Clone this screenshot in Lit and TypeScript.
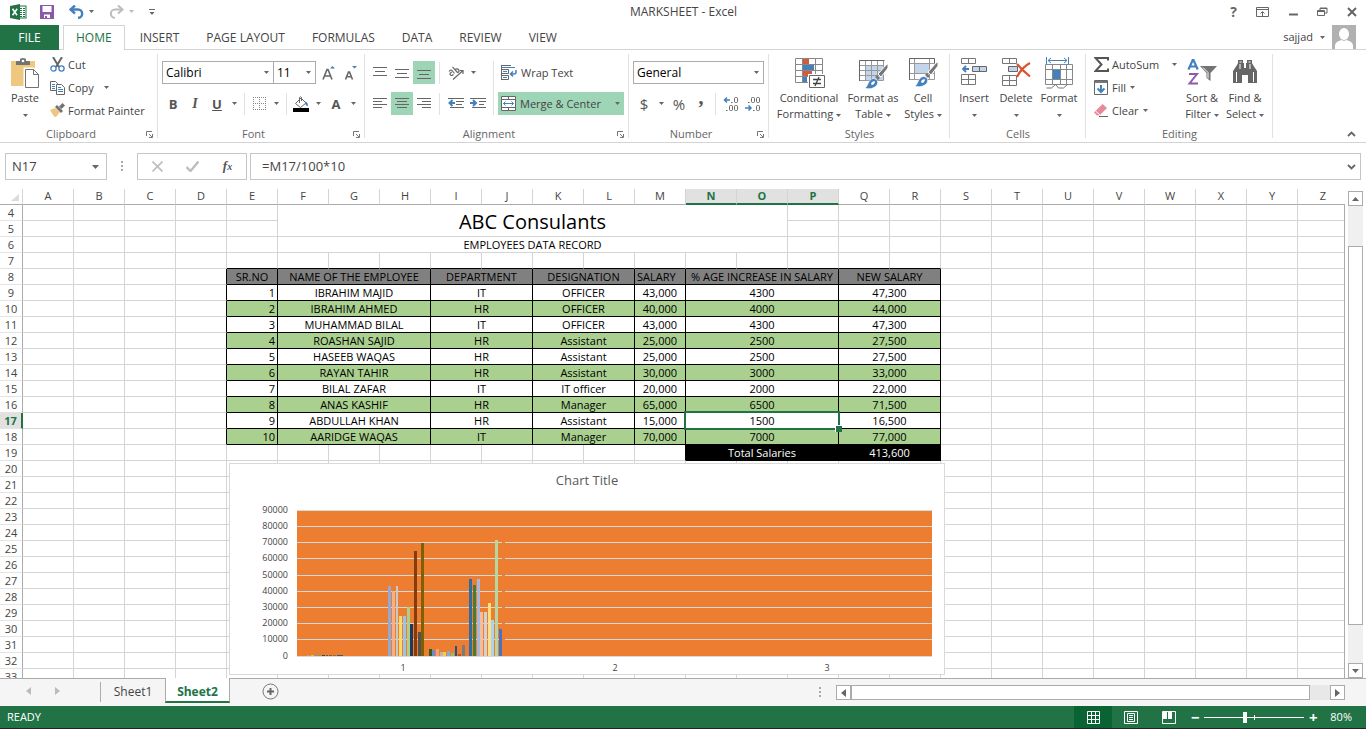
import { LitElement, html, svg, css, nothing } from "lit";
import { customElement, state } from "lit/decorators.js";
import { classMap } from "lit/directives/class-map.js";

const icon = (w: number, h: number, body: unknown) =>
  html`<svg class="ico" width=${w} height=${h} viewBox="0 0 ${w} ${h}" aria-hidden="true">${body}</svg>`;

const arrow = html`<svg class="ico arrow" width="5" height="3" viewBox="0 0 5 3" aria-hidden="true"><path d="M0 0h5L2.5 3z" fill="currentColor" /></svg>`;

const brush = svg`
  <path d="M29 3 L20 13 L23 16 L30 7 V3z" fill="#777" stroke="#fff"/>
  <path d="M19 14 l3 3 -2 2 -3-3z" fill="#777"/>
  <path d="M7 27 C10 26 10 18 15.500 17.500 C20 18 20.500 22 18.500 24.500 C16 27.500 11 28.500 7 27z" fill="#447fbe" stroke="#fff" stroke-width=".6"/>
  <path d="M13 23c.5-2 2-3 4-2.500-.2 2-1.500 3.500-3.200 3.500z" fill="#fff"/>`;

const I = {
  excel: icon(17, 16, svg`
    <rect x="8" y="2" width="8" height="12" fill="#fff" stroke="#217346"/>
    <path d="M10 4.500h2M13 4.500h2M10 6.500h2M13 6.500h2M10 8.500h2M13 8.500h2M10 10.500h2M13 10.500h2M10 12.500h2M13 12.500h2" stroke="#217346"/>
    <path d="M0 2 L10 0 V16 L0 14z" fill="#217346"/>
    <path d="M2.500 4.800 L7 11.200 M7.200 4.800 L2.500 11.200" stroke="#fff" stroke-width="1.600"/>`),
  save: icon(14, 14, svg`
    <path d="M0 0h14v14H0z" fill="#8b57a8"/><path d="M2.500 1h9v6h-9z" fill="#fff"/><path d="M4 9.500h6V13H4z" fill="#fff"/><path d="M5 11h2v2H5z" fill="#8b57a8"/>`),
  undo: icon(15, 14, svg`
    <path d="M2 4.500h7a4 4 0 0 1 0 8.300" fill="none" stroke="#447fbe" stroke-width="2.400"/><path d="M6 .5 L1.500 4.500 L6 8.500" fill="none" stroke="#447fbe" stroke-width="2.400"/>`),
  redo: icon(15, 14, svg`
    <path d="M13 4.500H6a4 4 0 0 0 0 8.300" fill="none" stroke="#bcbcbc" stroke-width="2"/><path d="M9 .5 L13.500 4.500 L9 8.500" fill="none" stroke="#bcbcbc" stroke-width="2"/>`),
  qat: icon(6, 6, svg`<path d="M0 .5h6" stroke="#666"/><path d="M.500 3h5L3 6z" fill="#666"/>`),
  ribbonOpts: icon(13, 10, svg`
    <path d="M.5.5h12v9H.5zM.5 2.500h12" fill="none" stroke="#666"/><path d="M6.500 9V5M4.500 6.500l2-2 2 2" fill="none" stroke="#666"/>`),
  min: icon(10, 10, svg`<path d="M1 7.500h9" stroke="#666" stroke-width="2"/>`),
  restore: icon(11, 10, svg`<path d="M.5 3.500h7v5h-7zM.5 4.500h7M3 3V1h7v5H8M3 1.500h7" fill="none" stroke="#666"/>`),
  close: icon(10, 10, svg`<path d="M1 1l8 8M9 1L1 9" stroke="#666" stroke-width="2"/>`),
  avatar: icon(24, 24, svg`
    <path d="M0 0h24v24H0z" fill="#b1b1b1"/><ellipse cx="12" cy="9" rx="5" ry="6" fill="#fff"/><path d="M3 24v-4q1-4 6-4.500l3 1.500 3-1.500q5 .5 6 4.500v4z" fill="#fff"/><path d="M9 14.500q3 2.500 6 0l.5 1.500L12 18l-3.500-2z" fill="#fff"/>`),
  paste: icon(30, 32, svg`
    <path d="M1 4h24v25H1z" fill="#edc87e"/><path d="M6 8V5q0-1 1-1h3V2.500Q10 1 13 1t3 1.500V4h3q1 0 1 1v3z" fill="#737373"/><circle cx="13" cy="4" r="1.300" fill="#fff"/>
    <path d="M14.500 11.500h9l5.500 5.500v13.500H14.500z" fill="#fff" stroke="#fff" stroke-width="2"/>
    <path d="M15.500 12.500h8l5 5v13h-13z" fill="#fff" stroke="#737373"/><path d="M23.500 12.500v5h5" fill="none" stroke="#737373"/>`),
  cut: icon(15, 15, svg`
    <path d="M3 0l6 10M12 0L6 10" stroke="#666" stroke-width="2"/>
    <circle cx="3.500" cy="11.500" r="2.600" fill="#fff" stroke="#447fbe" stroke-width="1.300"/><circle cx="11.500" cy="11.500" r="2.600" fill="#fff" stroke="#447fbe" stroke-width="1.300"/>`),
  copy: icon(15, 15, svg`
    <path d="M.5 1.500h5l2 2v7h-7z" fill="#fff" stroke="#666"/><path d="M2 4.500h3M2 6.500h3M2 8.500h3" stroke="#447fbe"/>
    <path d="M6.500 4.500h5l3 3v7h-8z" fill="#fff" stroke="#666"/><path d="M8 7.500h3M8 9.500h5M8 11.500h5" stroke="#447fbe"/>`),
  painter: icon(15, 15, svg`
    <path d="M0 7l5-2 5 4-4 5-2-.500z" fill="#edc87e"/><path d="M5 4l2-2 6 6-2 2z" fill="#737373"/><path d="M9 3.500L12.500 0 15 2.500 11.500 6z" fill="#737373"/>`),
  growA: icon(14, 16, svg`<path d="M1 14.500L5 4.500h1l4 10M2.500 11h6" fill="none" stroke="#666" stroke-width="1.600"/><path d="M8 3.500h5L10.500 1z" fill="#447fbe"/>`),
  shrinkA: icon(14, 16, svg`<path d="M1.500 14.500L4.500 7h1l3 7.500M2.500 11.800h5" fill="none" stroke="#666" stroke-width="1.600"/><path d="M8 1h5l-2.500 2.500z" fill="#447fbe"/>`),
  borders: icon(13, 13, svg`<path d="M.5 0v13M6.500 0v13M12.500 0v13M0 .5h13M0 6.500h13M0 12.500h13" fill="none" stroke="#888" stroke-dasharray="1 1"/>`),
  bucket: icon(16, 16, svg`
    <path d="M2.500 7.500L8 2l5 5-5.500 4.500z" fill="#fff" stroke="#666"/><path d="M6.500 7V1.500q1-1.500 2 0V5" fill="none" stroke="#666"/><path d="M12 5.500q4 1 2.500 5-1.500-1-2.500-3z" fill="#447fbe"/><path d="M0 12h16v4H0z" fill="#000"/>`),
  top: icon(14, 12, svg`<path d="M0 .5h14M2 4.500h10M0 8.500h14" stroke="#666"/>`),
  middle: icon(14, 12, svg`<path d="M0 2.500h14M2 6.500h10M0 10.500h14" stroke="#666"/>`),
  bottom: icon(14, 12, svg`<path d="M0 3.500h14M2 7.500h10M0 11.500h14" stroke="#666"/>`),
  left: icon(14, 12, svg`<path d="M0 .5h14M0 3.500h9M0 6.500h14M0 9.500h9" stroke="#666"/>`),
  center: icon(14, 12, svg`<path d="M0 .5h14M2 3.500h10M0 6.500h14M2 9.500h10" stroke="#666"/>`),
  right: icon(14, 12, svg`<path d="M0 .5h14M5 3.500h9M0 6.500h14M5 9.500h9" stroke="#666"/>`),
  orient: icon(16, 14, svg`
    <g fill="none" stroke="#666" stroke-width="1.200"><path d="M1 5.500q2-2.500 3.500-.5l2 2.500M4 6q-3 1-1.500 3 1.500 1 3-.5"/><path d="M4.500.8l5 5.700M7 3.500q2.500-1.500 3.700.3 1 2-1.200 2.900"/><path d="M5 13.500L15 4.500M11.500 4.500H15V8"/></g>`),
  outdent: icon(16, 12, svg`<path d="M0 .5h16M8 3.500h8M8 6.500h6M2 9.500h14" stroke="#666"/><path d="M7 5H2M4.500 2L1.500 5l3 3" fill="none" stroke="#447fbe" stroke-width="2"/>`),
  indent: icon(16, 12, svg`<path d="M0 .5h16M9 3.500h7M9 6.500h5M2 9.500h14" stroke="#666"/><path d="M0 5h5M3 2l3 3-3 3" fill="none" stroke="#447fbe" stroke-width="2"/>`),
  wrap: icon(16, 15, svg`
    <path d="M.5 0v15M.5.5H10M.5 4.500h7v4h-7M.5 10.500h7v4h-7" fill="none" stroke="#666"/><path d="M0 2.500h14M2 6.500h4M2 12.500h4" stroke="#447fbe"/><path d="M15 5v2q0 2-2 2h-3M12 6.500L9.500 9l2.500 2.500" fill="none" stroke="#447fbe" stroke-width="1.500"/>`),
  merge: icon(15, 15, svg`
    <path d="M.5.5h14v14H.5zM.5 3.500h14M.5 11.500h14M7.500 0v3M7.500 12v3" fill="#fff" stroke="#666"/><path d="M2.500 7.500h10M4.500 5.500l-2 2 2 2M10.500 5.500l2 2-2 2" fill="none" stroke="#447fbe"/>`),
  cond: icon(31, 32, svg`
    <path d="M1.500 1.500h27v24h-27z" fill="#fff"/><path d="M9 2h6v5H9zM9 13h9v6H9z" fill="#d35b3c"/><path d="M9 7h11v6H9zM9 19h4v6H9z" fill="#447fbe"/>
    <path d="M1.500 1.500h27v24h-27zM8.500 1v25M21.500 1v25M1 7.500h28M1 13.500h28M1 19.500h28" fill="none" stroke="#888"/>
    <path d="M14 17h17v15H14z" fill="#fff"/><path d="M15.500 18.500h15v12h-15z" fill="#fff" stroke="#666"/><path d="M19 22.500h8M19 26.500h8M25 20l-4 9" stroke="#444" stroke-width="1.300"/>`),
  table: icon(32, 32, svg`
    <path d="M2.500 3.500h24v20h-24z" fill="#fff"/><path d="M8 9h18v14H8z" fill="#c3d5ea"/>
    <path d="M2.500 3.500h24v20h-24zM2 8.500h25M2 13.500h25M2 18.500h25M8.500 3v21M14.500 3v21M20.500 3v21" fill="none" stroke="#999"/><path d="M2.500 24V3.500h25" fill="none" stroke="#666"/>
    <g transform="translate(1 4)">${brush}</g>`),
  cell: icon(32, 32, svg`
    <path d="M2.500 1.500h25v21h-25z" fill="#fff"/><path d="M2.500 1.500h25v21h-25zM7.500 1v22M22.500 1v22M2 6.500h26M2 16.500h26" fill="none" stroke="#999"/><path d="M8 7h14v9H8z" fill="#c3d5ea"/><path d="M2.500 23V1.500h25V6" fill="none" stroke="#666"/>
    <g transform="translate(1 2)">${brush}</g>`),
  insert: icon(28, 30, svg`
    <path d="M1.500 1.500h14v5h-14zM8.500 1v6" fill="#fff" stroke="#777"/><path d="M1.500 17.500h14v10h-14zM8.500 17v11M1 22.500h15" fill="#fff" stroke="#777"/>
    <path d="M12.500 9.500h14v5h-14z" fill="#c3d5ea" stroke="#666"/><path d="M19.500 9v6" stroke="#666"/><path d="M9 12H3M6 9l-3 3 3 3" fill="none" stroke="#447fbe" stroke-width="1.800"/>`),
  del: icon(30, 30, svg`
    <path d="M1.500 1.500h14v5h-14zM8.500 1v6" fill="#fff" stroke="#777"/><path d="M1.500 18.500h14v10h-14zM8.500 18v11M1 23.500h15" fill="#fff" stroke="#777"/>
    <path d="M7.500 9.500h9v5h-9z" fill="#c3d5ea" stroke="#666"/><path d="M16 7q5 6 13 12.500M29 6q-8 4-13 14" fill="none" stroke="#d8532f" stroke-width="2.200"/>`),
  format: icon(30, 32, svg`
    <path d="M2.500 0v7M24.500 0v7M4 3.500h19M7 1L4 3.500 7 6M20 1l3 2.500L20 6" fill="none" stroke="#447fbe"/>
    <path d="M1.500 7.500h27v20h-27zM1 12.500h28M1 22.500h28M8.500 7v21M16.500 7v21M22.500 7v21" fill="#fff" stroke="#888"/><path d="M9 13h7v9H9z" fill="#447fbe"/><path d="M2.500 31h5l4-3.500 3 3.500h5l4-3.500" fill="none" stroke="#777"/>`),
  sum: icon(15, 15, svg`<path d="M14 3.500V1H1.500l6 6.500-6 6.500H14v-2.500" fill="none" stroke="#555" stroke-width="2"/>`),
  fill: icon(14, 15, svg`<path d="M.5.5h13v14H.5z" fill="#fff" stroke="#666"/><path d="M1 1h12v2H1z" fill="#777"/><path d="M7 5v7M3.500 8.500L7 12l3.500-3.500" fill="none" stroke="#447fbe" stroke-width="2"/>`),
  clear: icon(15, 14, svg`<path d="M0 8.500L8.500 0 13 4 5.500 11.500H3z" fill="#e8899a"/><path d="M1.500 7l5 4.500" stroke="#fff"/><path d="M5 12.500h9" stroke="#666"/>`),
  sort: icon(30, 30, svg`
    <path d="M1.500 12.500L5.700 3h.8l4.200 9.500M3 9.500h6.500" fill="none" stroke="#447fbe" stroke-width="2.200"/><path d="M2 17h8L2.500 26.500H11" fill="none" stroke="#9059b0" stroke-width="2"/>
    <path d="M13 9h17l-6.500 7v8l-4-3v-5z" fill="#737373"/><path d="M16 10.500l5 5v6" fill="none" stroke="#fff"/>`),
  find: icon(28, 28, svg`
    <path d="M7 3h5v3h1v5h2V6h1V3h5v3l1 2 4 6v12h-9v-8h-6v8H2V14l4-6 1-2z" fill="#666"/><path d="M8.500 5h2M17.500 5h2M5.500 15v10M9 7v5M22.500 15v10M19 7v5" stroke="#fff"/>`),
  collapse: icon(9, 6, svg`<path d="M1 5l3.500-3.500L8 5" fill="none" stroke="#666" stroke-width="1.800"/>`),
  down: icon(9, 6, svg`<path d="M1 1l3.500 3.500L8 1" fill="none" stroke="#666" stroke-width="1.800"/>`),
  launcher: icon(7, 7, svg`<path d="M.5 5V.5H6M3 3l3 3M6.500 3v3.500H3" fill="none" stroke="#777"/>`),
  dots: icon(3, 11, svg`<path d="M0 0h2v2H0zM0 4h2v2H0zM0 8h2v2H0z" fill="#aaa"/>`),
  cancel: icon(11, 11, svg`<path d="M.5.500l10 10M10.500.500l-10 10" stroke="#bdbdbd" stroke-width="1.600"/>`),
  enter: icon(13, 11, svg`<path d="M.5 6L4.500 10 12.500.500" fill="none" stroke="#bdbdbd" stroke-width="2.400"/>`),
  decInc: icon(15, 14, svg`<path d="M7 3H1M4 .5L1.500 3 4 5.500" fill="none" stroke="#447fbe" stroke-width="1.500"/><g fill="none" stroke="#666"><rect x="11.500" y=".5" width="3" height="5" rx="1"/><rect x="6.500" y="8.500" width="3" height="5" rx="1"/><rect x="11.500" y="8.500" width="3" height="5" rx="1"/></g><path d="M8 5h1.500v1H8zM3 13h1.500v1H3z" fill="#666"/>`),
  decDec: icon(15, 14, svg`<path d="M0 11h6M3.500 8.500L6 11l-2.500 2.500" fill="none" stroke="#447fbe" stroke-width="1.500"/><g fill="none" stroke="#666"><rect x="6.500" y=".5" width="3" height="5" rx="1"/><rect x="11.500" y=".5" width="3" height="5" rx="1"/><rect x="11.500" y="8.500" width="3" height="5" rx="1"/></g><path d="M3 5h1.500v1H3zM8 13h1.500v1H8z" fill="#666"/>`),
  plus: icon(17, 17, svg`<circle cx="8.500" cy="8.500" r="7.500" fill="none" stroke="#777"/><path d="M8.500 5v7M5 8.500h7" stroke="#666" stroke-width="2"/>`),
  prev: icon(5, 8, svg`<path d="M5 0v8L0 4z" fill="currentColor"/>`),
  next: icon(5, 8, svg`<path d="M0 0v8l5-4z" fill="currentColor"/>`),
  up: icon(7, 4, svg`<path d="M0 4h7L3.500 0z" fill="currentColor"/>`),
  dn: icon(7, 4, svg`<path d="M0 0h7L3.500 4z" fill="currentColor"/>`),
  corner: icon(8, 7, svg`<path d="M8 0v7H0z" fill="#dcdcdc"/>`),
  normal: icon(13, 13, svg`<path d="M.5.5h12v12H.5zM4.500 0v13M8.500 0v13M0 4.500h13M0 8.500h13" fill="none" stroke="#fff"/>`),
  pageLayout: icon(14, 13, svg`<path d="M.5.5h13v12H.5zM3.500 2.500h7v8h-7zM5 4.500h4M5 6.500h4M5 8.500h4" fill="none" stroke="#fff"/>`),
  pageBreak: icon(14, 13, svg`<path d="M.5.5h13v12H.5z" fill="none" stroke="#fff"/><path d="M1 1h4v7H1zM6 1h4v7H6z" fill="#fff"/>`),
};

interface Employee { name: string; dept: string; role: string; salary: string; raise: string; total: string }

const EMPLOYEES: Employee[] = [
  ["IBRAHIM MAJID", "IT", "OFFICER", "43,000", "4300", "47,300"],
  ["IBRAHIM AHMED", "HR", "OFFICER", "40,000", "4000", "44,000"],
  ["MUHAMMAD BILAL", "IT", "OFFICER", "43,000", "4300", "47,300"],
  ["ROASHAN SAJID", "HR", "Assistant", "25,000", "2500", "27,500"],
  ["HASEEB WAQAS", "HR", "Assistant", "25,000", "2500", "27,500"],
  ["RAYAN TAHIR", "HR", "Assistant", "30,000", "3000", "33,000"],
  ["BILAL ZAFAR", "IT", "IT officer", "20,000", "2000", "22,000"],
  ["ANAS KASHIF", "HR", "Manager", "65,000", "6500", "71,500"],
  ["ABDULLAH KHAN", "HR", "Assistant", "15,000", "1500", "16,500"],
  ["AARIDGE WAQAS", "IT", "Manager", "70,000", "7000", "77,000"],
].map(([name, dept, role, salary, raise, total]) => ({ name, dept, role, salary, raise, total }));

const COLUMNS = "ABCDEFGHIJKLMNOPQRSTUVWXYZ".split("");
const ROWS = Array.from({ length: 30 }, (_, i) => i + 4);

/* Chart series: x, width, top, colour; every bar stands on the category axis. */
const BASE = 193;
const BARS: [number, number, number, string][] = [
  [78, 3, 192, "#a5a5a5"], [82, 3, 192, "#ffc000"], [85, 3, 192, "#5b9bd5"], [89, 3, 192, "#70ad47"], [93, 3, 192, "#264478"],
  [97, 2, 192, "#9e480e"], [100, 3, 192, "#636363"], [104, 3, 192, "#997300"], [108, 3, 192, "#255e91"], [111, 3, 192, "#43682b"],
  [159, 3, 123, "#8faadc"], [163, 3, 128, "#f4b183"], [167, 2, 123, "#c9c9c9"], [170, 3, 153, "#ffd966"], [174, 3, 153, "#9dc3e6"],
  [178, 3, 144, "#a9d18e"], [181, 3, 161, "#203864"], [185, 3, 88, "#843c0c"], [189, 3, 169, "#525252"], [192, 3, 80, "#7f6000"],
  [200, 3, 186, "#3a5a24"], [203, 3, 187, "#698ed0"], [207, 3, 186, "#f1a377"], [211, 3, 189, "#b7b7b7"], [214, 3, 189, "#ffcd33"],
  [218, 3, 188, "#7cafdd"], [222, 3, 190, "#8cc168"], [226, 2, 183, "#264f91"], [229, 3, 191, "#b85410"], [233, 3, 182, "#7b7b7b"],
  [240, 3, 116, "#2e6ca4"], [244, 3, 122, "#4f7b2f"], [248, 3, 116, "#a2b9e2"], [251, 3, 149, "#f4bd9e"], [255, 3, 149, "#d2d2d2"],
  [259, 3, 140, "#ffe07f"], [262, 3, 157, "#b1cfee"], [266, 3, 77, "#b7d7a0"], [270, 3, 166, "#4472c4"], [273, 3, 68, "#ed7d31"],
];
const GRIDLINES = [47, 63, 79, 95, 112, 128, 144, 160, 176, 193];

@customElement("app-root")
export class AppRoot extends LitElement {
  @state() private tab = "HOME";
  @state() private sheet = "Sheet2";

  static styles = css`
    :host { display: flex; flex-direction: column; height: 100vh; background: #fff; color: #444; font: 11px/16px "Open Sans", "Noto Sans", sans-serif; overflow: hidden; }
    * { box-sizing: border-box; }
    button, input, select { font: inherit; color: inherit; background: none; border: 0; padding: 0; margin: 0; border-radius: 0; }
    button { display: flex; align-items: center; justify-content: center; white-space: nowrap; }
    select { appearance: none; }
    a { color: inherit; text-decoration: none; }
    .ico { display: block; flex: none; }
    .arrow { display: inline-block; vertical-align: middle; color: #666; }

    .titlebar { display: grid; grid-template-columns: 1fr auto 1fr; align-items: center; height: 25px; padding: 0 9px 2px 10px; flex: none; font-size: 12px; }
    .quick { display: flex; align-items: center; }
    .quick .save { margin-left: 13px; }
    .quick .undo { margin-left: 15px; }
    .quick .split { margin-left: 5px; width: 5px; }
    .quick .redo { margin-left: 15px; }
    .quick .faint .arrow { color: #bbb; }
    .quick .more { margin-left: 15px; }
    .window { display: flex; justify-content: flex-end; gap: 19px; align-items: center; }
    .window .help { font: bold 14px/16px "Open Sans", sans-serif; color: #666; }

    .tabs { display: flex; gap: 1px; height: 25px; flex: none; border-bottom: 1px solid #d4d4d4; padding-right: 10px; font-size: 12px; }
    .tabs a { padding: 0 13px; line-height: 25px; }
    .tabs .file { background: #217346; color: #fff; width: 59px; margin-right: 3px; text-align: center; padding: 0; height: 25px; }
    .tabs .current { height: 25px; color: #217346; background: #fff; border: 1px solid #d4d4d4; border-bottom: 0; padding: 0 12px; margin-right: 1px; line-height: 24px; }
    .user { margin-left: auto; display: flex; align-items: center; gap: 7px; font-size: 11px; }

    .ribbon { display: flex; height: 93px; flex: none; border-bottom: 1px solid #d4d4d4; position: relative; }
    .group { display: flex; flex-direction: column; position: relative; flex: none; }
    .group::after { content: ""; position: absolute; right: 0; top: 4px; height: 84px; width: 1px; background: #e1e1e1; }
    .body { display: flex; height: 76px; padding-top: 3px; }
    .label { display: flex; height: 16px; color: #666; text-align: center; padding: 0 5px; align-items: center; }
    .label span { flex: 1; padding-right: 9px; }
    .label.plain span { padding-right: 0; }
    .clipboard { width: 158px; } .font { width: 207px; } .alignment { width: 264px; } .number { width: 140px; }
    .styles { width: 181px; } .cells { width: 136px; } .editing { width: 187px; }
    .big { flex-direction: column; justify-content: flex-start; padding-top: 3px; height: 73px; }
    .big .pic { height: 34px; display: flex; align-items: flex-start; padding-top: 1px; }
    .big .line { display: block; height: 16px; }
    .w40 { width: 40px; } .w42 { width: 42px; } .w44 { width: 44px; } .w46 { width: 46px; } .w54 { width: 54px; } .w74 { width: 74px; }
    .clipboard .body { padding-left: 5px; gap: 5px; }
    .styles .body, .cells .body { padding-left: 3px; }
    .stack { display: flex; flex-direction: column; }
    .stack button { height: 23px; justify-content: flex-start; gap: 4px; }
    .stack .pic { width: 14px; display: flex; justify-content: center; }
    .clipboard .stack .arrow { margin-left: 6px; }
    .editing .body { padding-left: 8px; }
    .editing .stack { width: 87px; }
    .editing .stack .far { margin-left: auto; padding-right: 4px; display: flex; }

    .rows { display: flex; flex-direction: column; padding-top: 8px; gap: 8px; }
    .row { display: flex; height: 23px; align-items: center; }
    .font .rows, .number .rows, .alignment .body { padding-left: 4px; }
    .combo { position: relative; display: flex; height: 23px; }
    .combo select { width: 100%; height: 23px; border: 1px solid #ababab; padding-left: 3px; color: #000; font-size: 12px; }
    .combo .arrow { position: absolute; right: 5px; top: 10px; }
    .face { width: 112px; } .size { width: 43px; margin: 0 2px 0 -1px; } .fmt { width: 131px; }
    .tool { width: 22px; height: 23px; color: #555; }
    .tool.on, .wide.on { background: #9fd5b7; }
    .drop { width: 13px; height: 23px; }
    .b { font-weight: bold; font-size: 13px; } .i { font: italic bold 14px/16px "Liberation Serif", serif; } .u { font-weight: bold; font-size: 13px; text-decoration: underline; }
    .sym { font-size: 15px; }
    .comma { font: bold 20px/16px "Liberation Serif", serif; padding-bottom: 14px; }
    .sep { width: 1px; height: 22px; background: #e1e1e1; margin: 0 3px; flex: none; }
    .alignment .sep { margin: 0 5px 0 4px; }
    .alignment .sep.tall { height: 54px; margin: 8px 4px 0; }
    .wide { height: 23px; width: 126px; padding: 0 4px 0 3px; gap: 4px; justify-content: flex-start; }
    .wide .arrow { margin-left: auto; }
    .collapse { position: absolute; right: 10px; bottom: 5px; }

    .formula { display: flex; height: 46px; padding: 10px 5px 9px; flex: none; font-size: 13px; }
    .box { border: 1px solid #c6c6c6; display: flex; align-items: center; height: 27px; color: #666; }
    .box input { padding-bottom: 2px; color: #444; }
    .name { width: 102px; padding: 0 6px; }
    .name input { width: 80px; }
    .formula .grip { width: 30px; display: flex; justify-content: center; align-items: center; }
    .fx { width: 110px; justify-content: space-around; padding: 0 2px; margin-right: 3px; }
    .fx .func { font: italic bold 13px/16px "Liberation Serif", serif; color: #555; }
    .fx small { font-size: 10px; }
    .expr { flex: 1; padding: 0 4px 0 11px; }
    .expr input { flex: 1; }

    .work { display: flex; flex: 1; min-height: 0; border-bottom: 1px solid #ababab; }
    .grid { flex: 1; min-width: 0; overflow: hidden; position: relative; }
    table { border-collapse: separate; border-spacing: 0; table-layout: fixed; width: 1349px; color: #000; }
    .rowcol { width: 23px; } .col { width: 51px; }
    th, td { padding: 0; height: 16px; line-height: 15px; font-weight: normal; border: 0 solid #d4d4d4; border-width: 0 1px 1px 0; white-space: nowrap; text-align: center; }
    thead th { border-bottom-color: #ababab; color: #444; line-height: 14px; vertical-align: top; }
    tbody th { border-right-color: #ababab; border-bottom-color: #e4e4e4; color: #444; }
    thead th.sel { background: #e1e1e1; color: #217346; font-weight: bold; border-bottom: 2px solid #217346; }
    tbody th.sel { background: #e1e1e1; color: #217346; font-weight: bold; border-right: 2px solid #217346; }
    thead th.corner { padding: 5px 0 0 11px; }
    td.bb { border-bottom-color: #000; }
    td.br { border-right-color: #000; }
    td.head { background: #808080; }
    td.alt { background: #a9d08e; }
    td.num { text-align: right; padding-right: 2px; }
    td.money { text-align: right; padding-right: 8px; }
    td.start { text-align: left; padding-left: 2px; }
    td.black { background: #000; color: #fff; border-color: #000; }
    td.title { font-size: 20px; line-height: 28px; padding-top: 3px; }
    td.active { position: relative; }
    .cursor { position: absolute; inset: -2px; border: 2px solid #217346; z-index: 1; }
    .cursor::after { content: ""; position: absolute; right: -4px; bottom: -4px; width: 6px; height: 6px; background: #217346; border: solid #fff; border-width: 1px 0 0 1px; }
    .chart { position: absolute; left: 229px; top: 274px; margin: 0; }
    .chart svg { display: block; }
    .chart text { fill: #595959; }
    .chart .ct { font-size: 13px; }
    .chart .ax { font-size: 9px; fill: #444; }

    .vscroll { width: 22px; position: relative; padding: 2px 3px 0 4px; display: flex; flex-direction: column; flex: none; }
    .vscroll::before { content: ""; position: absolute; left: 0; top: 15px; bottom: 0; width: 1px; background: #ababab; }
    .vtrack { flex: 1; width: 15px; background: #f0f0f0; padding: 40px 0 38px; display: flex; }
    .thumb { flex: 1; border: 1px solid #ababab; background: #fff; }
    .sb { width: 15px; height: 15px; border: 1px solid #ababab; background: #fff; color: #666; flex: none; }

    .sheets { display: flex; height: 27px; flex: none; background: #f5f5f5; font-size: 12px; padding-right: 21px; }
    .nav { width: 100px; padding: 0 40px 3px 26px; display: flex; justify-content: space-between; align-items: center; color: #bbb; }
    .sheets a { height: 20px; width: 65px; text-align: center; border-left: 1px solid #ababab; margin-top: 3px; line-height: 19px; }
    .sheets a.current { color: #217346; font-weight: bold; background: #fff; height: 25px; margin-top: -1px; border-right: 1px solid #ababab; border-bottom: 2px solid #217346; line-height: 27px; }
    .add { margin: 0 0 2px 32px; }
    .sheets .grip { margin-left: auto; padding: 8px 14px 0 0; }
    .hscroll { display: flex; width: 509px; margin-top: 6px; height: 15px; }
    .htrack { flex: 1; background: #e8e8e8; display: flex; padding-right: 20px; }

    .status { display: flex; height: 23px; flex: none; background: #217346; color: #fff; border-bottom: 1px solid #222; align-items: stretch; padding: 0 14px 0 7px; }
    .status .ready { margin-right: auto; line-height: 22px; }
    .view { width: 38px; }
    .view.on { background: #0a6332; }
    .zoom { display: flex; align-items: center; }
    .zoom button { width: 14px; font: bold 15px/16px "Open Sans", sans-serif; }
    .zoom input { appearance: none; width: 100px; height: 12px; margin: 0 2px; background: linear-gradient(#fff, #fff) 0 50% / 100% 1px no-repeat, linear-gradient(#fff, #fff) 50% 50% / 1px 5px no-repeat; }
    .zoom input::-webkit-slider-thumb { appearance: none; width: 4px; height: 11px; background: #fff; }
    .zoom .pct { margin-left: 10px; }
  `;

  private big(pic: unknown, a: string, b: string, w: string) {
    return html`<button class="big ${w}"><span class="pic">${pic}</span><span class="line">${a}</span><span class="line">${b} ${arrow}</span></button>`;
  }

  private label(name: string, launcher = true) {
    return html`<div class=${classMap({ label: true, plain: !launcher })}><span>${name}</span>${launcher ? html`<button aria-label="${name} settings">${I.launcher}</button>` : nothing}</div>`;
  }

  private tool(pic: unknown, name: string, on = false) {
    return html`<button class=${classMap({ tool: true, on })} aria-label=${name}>${pic}</button>`;
  }

  private drop(name: string) {
    return html`<button class="drop" aria-label="${name} options">${arrow}</button>`;
  }

  private ribbon() {
    return html`
      <section class="ribbon">
        <div class="group clipboard">
          <div class="body">
            ${this.big(I.paste, "Paste", "", "w40")}
            <div class="stack">
              <button><span class="pic">${I.cut}</span>Cut</button>
              <button><span class="pic">${I.copy}</span>Copy ${arrow}</button>
              <button><span class="pic">${I.painter}</span>Format Painter</button>
            </div>
          </div>
          ${this.label("Clipboard")}
        </div>
        <div class="group font">
          <div class="body"><div class="rows">
            <div class="row">
              <label class="combo face"><select aria-label="Font"><option>Calibri</option></select>${arrow}</label>
              <label class="combo size"><select aria-label="Font size"><option>11</option></select>${arrow}</label>
              ${this.tool(I.growA, "Increase font size")}${this.tool(I.shrinkA, "Decrease font size")}
            </div>
            <div class="row">
              <button class="tool b">B</button><button class="tool i">I</button><button class="tool u">U</button>${this.drop("Underline")}
              <span class="sep"></span>${this.tool(I.borders, "Borders")}${this.drop("Borders")}
              <span class="sep"></span>${this.tool(I.bucket, "Fill color")}${this.drop("Fill color")}<button class="tool b">A</button>${this.drop("Font color")}
            </div>
          </div></div>
          ${this.label("Font")}
        </div>
        <div class="group alignment">
          <div class="body">
            <div class="rows">
              <div class="row">${this.tool(I.top, "Top align")}${this.tool(I.middle, "Middle align")}${this.tool(I.bottom, "Bottom align", true)}
                <span class="sep"></span>${this.tool(I.orient, "Orientation")}${this.drop("Orientation")}</div>
              <div class="row">${this.tool(I.left, "Align left")}${this.tool(I.center, "Center", true)}${this.tool(I.right, "Align right")}
                <span class="sep"></span>${this.tool(I.outdent, "Decrease indent")}${this.tool(I.indent, "Increase indent")}</div>
            </div>
            <span class="sep tall"></span>
            <div class="rows">
              <button class="wide">${I.wrap}Wrap Text</button>
              <button class="wide on">${I.merge}Merge &amp; Center ${arrow}</button>
            </div>
          </div>
          ${this.label("Alignment")}
        </div>
        <div class="group number">
          <div class="body"><div class="rows">
            <label class="combo fmt"><select aria-label="Number format"><option>General</option></select>${arrow}</label>
            <div class="row">
              <button class="tool sym">$</button>${this.drop("Accounting")}<button class="tool sym">%</button><button class="tool comma">,</button>
              <span class="sep"></span>${this.tool(I.decInc, "Increase decimal")}${this.tool(I.decDec, "Decrease decimal")}
            </div>
          </div></div>
          ${this.label("Number")}
        </div>
        <div class="group styles">
          <div class="body">
            ${this.big(I.cond, "Conditional", "Formatting", "w74")}${this.big(I.table, "Format as", "Table", "w54")}${this.big(I.cell, "Cell", "Styles", "w46")}
          </div>
          ${this.label("Styles", false)}
        </div>
        <div class="group cells">
          <div class="body">${this.big(I.insert, "Insert", "", "w42")}${this.big(I.del, "Delete", "", "w42")}${this.big(I.format, "Format", "", "w44")}</div>
          ${this.label("Cells", false)}
        </div>
        <div class="group editing">
          <div class="body">
            <div class="stack">
              <button><span class="pic">${I.sum}</span>AutoSum <span class="far">${arrow}</span></button>
              <button><span class="pic">${I.fill}</span>Fill ${arrow}</button>
              <button><span class="pic">${I.clear}</span>Clear ${arrow}</button>
            </div>
            ${this.big(I.sort, "Sort &", "Filter", "w42")}${this.big(I.find, "Find &", "Select", "w44")}
          </div>
          ${this.label("Editing", false)}
        </div>
        <button class="collapse" aria-label="Collapse the ribbon">${I.collapse}</button>
      </section>`;
  }

  private empty(n: number, last = "") {
    return Array.from({ length: n }, (_, i) => html`<td class=${i === n - 1 ? last : ""}></td>`);
  }

  private cells(row: number) {
    if (row === 4) return html`${this.empty(5)}<td class="title" colspan="10" rowspan="2">ABC Consulants</td>${this.empty(11)}`;
    if (row === 5) return html`${this.empty(5)}${this.empty(11)}`;
    if (row === 6) return html`${this.empty(5)}<td colspan="10">EMPLOYEES DATA RECORD</td>${this.empty(11)}`;
    if (row === 7) return COLUMNS.map((_, i) => html`<td class=${i >= 4 && i <= 17 ? "bb" : ""}></td>`);
    if (row === 8) {
      return html`${this.empty(4, "br")}
        <td class="bb br head">SR.NO</td><td class="bb br head" colspan="3">NAME OF THE EMPLOYEE</td><td class="bb br head" colspan="2">DEPARTMENT</td>
        <td class="bb br head" colspan="2">DESIGNATION</td><td class="bb br head start">SALARY</td><td class="bb br head" colspan="3">% AGE INCREASE IN SALARY</td>
        <td class="bb br head" colspan="2">NEW SALARY</td>${this.empty(8)}`;
    }
    if (row <= 18) {
      const e = EMPLOYEES[row - 9];
      const c = row % 2 ? "bb br" : "bb br alt";
      return html`${this.empty(4, "br")}
        <td class="${c} num">${row - 8}</td><td class=${c} colspan="3">${e.name}</td><td class=${c} colspan="2">${e.dept}</td>
        <td class=${c} colspan="2">${e.role}</td><td class="${c} money">${e.salary}</td>
        <td class="${c} ${row === 17 ? "active" : ""}" colspan="3">${e.raise}${row === 17 ? html`<span class="cursor"></span>` : nothing}</td>
        <td class=${c} colspan="2">${e.total}</td>${this.empty(8)}`;
    }
    if (row === 19) return html`${this.empty(13, "br")}<td class="black" colspan="3">Total Salaries</td><td class="black" colspan="2">413,600</td>${this.empty(8)}`;
    return this.empty(26);
  }

  private chart() {
    return html`<figure class="chart">
      <svg width="716" height="212" viewBox="0 0 716 212" role="img" aria-label="Chart Title">
        <rect x=".5" y=".5" width="715" height="211" fill="#fff" stroke="#d9d9d9" />
        <text class="ct" x="358" y="22" text-anchor="middle">Chart Title</text>
        <rect x="68" y="47" width="635" height="146" fill="#ed7d31" />
        ${GRIDLINES.map((y) => svg`<rect x="68" y=${y} width="635" height="1" fill="#d9d9d9"/>`)}
        ${BARS.map(([x, w, y, c]) => svg`<rect x=${x} y=${y} width=${w} height=${BASE - y} fill=${c}/>`)}
        ${GRIDLINES.map((y, i) => svg`<text class="ax" x="59" y=${y + 3} text-anchor="end">${(9 - i) * 10000}</text>`)}
        ${[1, 2, 3].map((n) => svg`<text class="ax" x=${n * 212 - 38} y="208" text-anchor="middle">${n}</text>`)}
      </svg>
    </figure>`;
  }

  render() {
    const tabs = ["HOME", "INSERT", "PAGE LAYOUT", "FORMULAS", "DATA", "REVIEW", "VIEW"];
    return html`
      <header class="titlebar">
        <div class="quick">
          ${I.excel}<button class="save" aria-label="Save">${I.save}</button>
          <button class="undo" aria-label="Undo">${I.undo}</button><button class="split" aria-label="Undo list">${arrow}</button>
          <button class="redo" aria-label="Redo">${I.redo}</button><button class="split faint" aria-label="Redo list">${arrow}</button>
          <button class="more" aria-label="Customize toolbar">${I.qat}</button>
        </div>
        <span>MARKSHEET - Excel</span>
        <div class="window">
          <button class="help" aria-label="Help">?</button><button aria-label="Ribbon display options">${I.ribbonOpts}</button>
          <button aria-label="Minimize">${I.min}</button><button aria-label="Restore">${I.restore}</button><button aria-label="Close">${I.close}</button>
        </div>
      </header>
      <nav class="tabs">
        <a class="file" href="#">FILE</a>
        ${tabs.map((t) => html`<a href="#" class=${classMap({ current: t === this.tab })} @click=${() => (this.tab = t)}>${t}</a>`)}
        <div class="user"><span>sajjad</span>${arrow}${I.avatar}</div>
      </nav>
      ${this.ribbon()}
      <section class="formula">
        <label class="box name"><input aria-label="Name box" value="N17" />${I.dn}</label>
        <span class="grip">${I.dots}</span>
        <div class="box fx">
          <button aria-label="Cancel">${I.cancel}</button><button aria-label="Enter">${I.enter}</button><button class="func"><span>f<small>x</small></span></button>
        </div>
        <label class="box expr"><input aria-label="Formula" value="=M17/100*10" />${I.down}</label>
      </section>
      <main class="work">
        <div class="grid">
          <table>
            <colgroup><col class="rowcol" />${COLUMNS.map(() => html`<col class="col" />`)}</colgroup>
            <thead><tr><th class="corner">${I.corner}</th>${COLUMNS.map((c) => html`<th class=${"NOP".includes(c) ? "sel" : ""}>${c}</th>`)}</tr></thead>
            <tbody>${ROWS.map((r) => html`<tr><th class=${r === 17 ? "sel" : ""}>${r}</th>${this.cells(r)}</tr>`)}</tbody>
          </table>
          ${this.chart()}
        </div>
        <div class="vscroll">
          <button class="sb" aria-label="Scroll up">${I.up}</button>
          <div class="vtrack"><div class="thumb"></div></div>
          <button class="sb" aria-label="Scroll down">${I.dn}</button>
        </div>
      </main>
      <nav class="sheets">
        <div class="nav"><button aria-label="Previous sheet">${I.prev}</button><button aria-label="Next sheet">${I.next}</button></div>
        ${["Sheet1", "Sheet2"].map((s) => html`<a href="#" class=${classMap({ current: s === this.sheet })} @click=${() => (this.sheet = s)}>${s}</a>`)}
        <button class="add" aria-label="New sheet">${I.plus}</button>
        <span class="grip">${I.dots}</span>
        <div class="hscroll">
          <button class="sb" aria-label="Scroll left">${I.prev}</button>
          <div class="htrack"><div class="thumb"></div></div>
          <button class="sb" aria-label="Scroll right">${I.next}</button>
        </div>
      </nav>
      <footer class="status">
        <span class="ready">READY</span>
        <button class="view on" aria-label="Normal">${I.normal}</button><button class="view" aria-label="Page layout">${I.pageLayout}</button><button class="view" aria-label="Page break preview">${I.pageBreak}</button>
        <div class="zoom"><button aria-label="Zoom out">−</button><input type="range" aria-label="Zoom" min="0" max="100" value="40" /><button aria-label="Zoom in">+</button><span class="pct">80%</span></div>
      </footer>`;
  }
}
